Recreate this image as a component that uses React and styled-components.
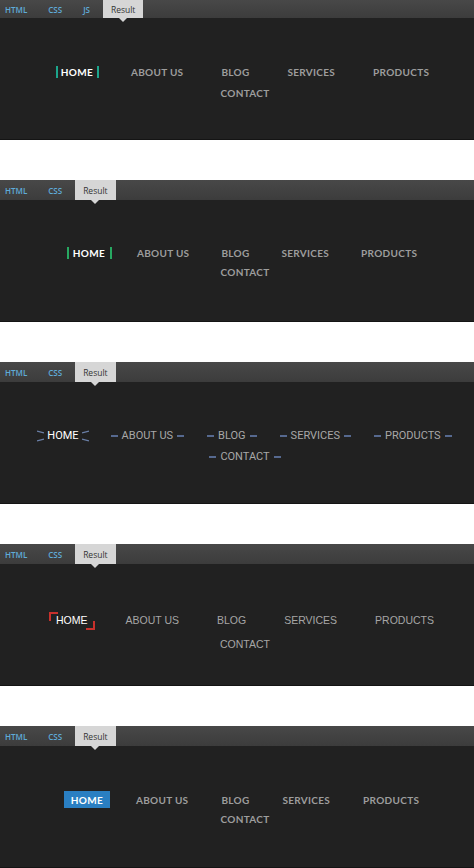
import styled, { createGlobalStyle, css } from "styled-components";

const GlobalStyle = createGlobalStyle`
  body {
    margin: 0;
    background: #fff;
    font-family: "Lato", sans-serif;
  }
`;

const Page = styled.div`
  display: flex;
  flex-direction: column;
  gap: 40px;
`;

const Demo = styled.section`
  display: flex;
  flex-direction: column;
  height: ${(p) => (p.$cropped ? 140 : 142)}px;
  background: #212121;
  border-bottom: 1px solid #141414;
  box-sizing: border-box;
`;

const Toolbar = styled.div`
  display: flex;
  align-items: stretch;
  gap: 11px;
  height: ${(p) => (p.$cropped ? 18 : 20)}px;
  flex-shrink: 0;
  background: linear-gradient(#484848, #3c3c3c);
`;

const Tab = styled.span`
  position: relative;
  display: flex;
  align-items: center;
  padding: 0 5px;
  font-family: "Open Sans", sans-serif;
  font-size: 8px;
  font-weight: 600;
  color: #5fabd9;

  ${(p) =>
    p.$active &&
    css`
      margin-left: -3px;
      padding: 0 8px;
      background: #d6d6d6;
      color: #333;
      font-size: 8.5px;
      font-weight: 400;

      &::after {
        content: "";
        position: absolute;
        left: 50%;
        bottom: -4px;
        margin-left: -4px;
        border-left: 4px solid transparent;
        border-right: 4px solid transparent;
        border-top: 4px solid #d6d6d6;
      }
    `}
`;

const Stage = styled.div`
  flex: 1;
  display: flex;
  justify-content: center;
  align-items: flex-start;
  padding: ${(p) => p.$top || 46}px 0 0 16px;
`;

const Nav = styled.nav`
  display: flex;
  flex-wrap: wrap;
  justify-content: center;
  column-gap: ${(p) => p.$gap}px;
  row-gap: ${(p) => p.$rowGap}px;
  width: 100%;
  max-width: 420px;
`;

const linkBase = css`
  position: relative;
  display: inline-flex;
  align-items: center;
  line-height: 14px;
  text-transform: uppercase;
  white-space: nowrap;
  color: ${(p) => (p.$active ? "#fff" : "#9d9d9d")};
`;

const BracketLink = styled.span`
  ${linkBase}
  font-family: "Lato", sans-serif;
  font-size: 10px;
  font-weight: 700;
  letter-spacing: 0.3px;

  ${(p) =>
    p.$active &&
    css`
      &::before,
      &::after {
        content: "";
        position: absolute;
        top: 1px;
        bottom: 1px;
        width: 2px;
        background: ${p.$accent};
      }
      &::before {
        left: -${p.$offset}px;
      }
      &::after {
        right: -${p.$offset + 1}px;
      }
    `}
`;

const DashLink = styled.span`
  ${linkBase}
  gap: 3px;
  font-family: "Roboto", sans-serif;
  font-size: 11px;
  color: ${(p) => (p.$active ? "#fff" : "#a8a8a8")};
`;

const Dash = styled.span`
  display: inline-block;
  width: 7px;
  height: 1.5px;
  margin: 0 1px;
  background: #56698f;
`;

const CornerLink = styled.span`
  ${linkBase}
  font-family: "Liberation Sans", sans-serif;
  font-size: 10.5px;
  color: ${(p) => (p.$active ? "#fff" : "#a6a6a6")};

  ${(p) =>
    p.$active &&
    css`
      &::before,
      &::after {
        content: "";
        position: absolute;
        width: 7px;
        height: 7px;
        border: 0 solid #c8312c;
      }
      &::before {
        left: -7px;
        top: -1px;
        border-top-width: 2px;
        border-left-width: 2px;
      }
      &::after {
        right: -8px;
        bottom: -3px;
        border-bottom-width: 2px;
        border-right-width: 2px;
      }
    `}
`;

const BoxLink = styled.span`
  ${linkBase}
  padding: 2px 7px 1px;
  font-family: "Lato", sans-serif;
  font-size: 10px;
  font-weight: 700;
  letter-spacing: 0.3px;
  background: ${(p) => (p.$active ? "#2a7fc2" : "transparent")};
`;

const items = ["Home", "About Us", "Blog", "Services", "Products", "Contact"];

function Fan({ side }) {
  const lines =
    side === "left"
      ? [
          [0, 1, 7, 3],
          [0, 11, 7, 9],
        ]
      : [
          [0, 3, 7, 1],
          [0, 9, 7, 11],
        ];
  return (
    <svg width="7" height="12" viewBox="0 0 7 12">
      {lines.map(([x1, y1, x2, y2], i) => (
        <line key={i} x1={x1} y1={y1} x2={x2} y2={y2} stroke="#6b80a8" strokeWidth="1.3" />
      ))}
    </svg>
  );
}

function Tabs({ tabs, cropped }) {
  return (
    <Toolbar $cropped={cropped}>
      {tabs.map((t) => (
        <Tab key={t}>{t}</Tab>
      ))}
      <Tab $active>Result</Tab>
    </Toolbar>
  );
}

function App() {
  return (
    <>
      <GlobalStyle />
      <Page>
        <Demo $cropped>
          <Tabs tabs={["HTML", "CSS", "JS"]} cropped />
          <Stage $top={47}>
            <Nav $gap={38} $rowGap={7}>
              {items.map((item, i) => (
                <BracketLink key={item} $active={i === 0} $accent="#1ca58c" $offset={5}>
                  {item}
                </BracketLink>
              ))}
            </Nav>
          </Stage>
        </Demo>

        <Demo>
          <Tabs tabs={["HTML", "CSS"]} />
          <Stage>
            <Nav $gap={32} $rowGap={5}>
              {items.map((item, i) => (
                <BracketLink key={item} $active={i === 0} $accent="#27a861" $offset={6}>
                  {item}
                </BracketLink>
              ))}
            </Nav>
          </Stage>
        </Demo>

        <Demo>
          <Tabs tabs={["HTML", "CSS"]} />
          <Stage $top={47}>
            <Nav $gap={21} $rowGap={7}>
              {items.map((item, i) => (
                <DashLink key={item} $active={i === 0}>
                  {i === 0 ? <Fan side="left" /> : <Dash />}
                  {item}
                  {i === 0 ? <Fan side="right" /> : <Dash />}
                </DashLink>
              ))}
            </Nav>
          </Stage>
        </Demo>

        <Demo>
          <Tabs tabs={["HTML", "CSS"]} />
          <Stage $top={49}>
            <Nav $gap={38} $rowGap={10}>
              {items.map((item, i) => (
                <CornerLink key={item} $active={i === 0}>
                  {item}
                </CornerLink>
              ))}
            </Nav>
          </Stage>
        </Demo>

        <Demo>
          <Tabs tabs={["HTML", "CSS"]} />
          <Stage $top={45}>
            <Nav $gap={19} $rowGap={2}>
              {items.map((item, i) => (
                <BoxLink key={item} $active={i === 0}>
                  {item}
                </BoxLink>
              ))}
            </Nav>
          </Stage>
        </Demo>
      </Page>
    </>
  );
}

export default App;
